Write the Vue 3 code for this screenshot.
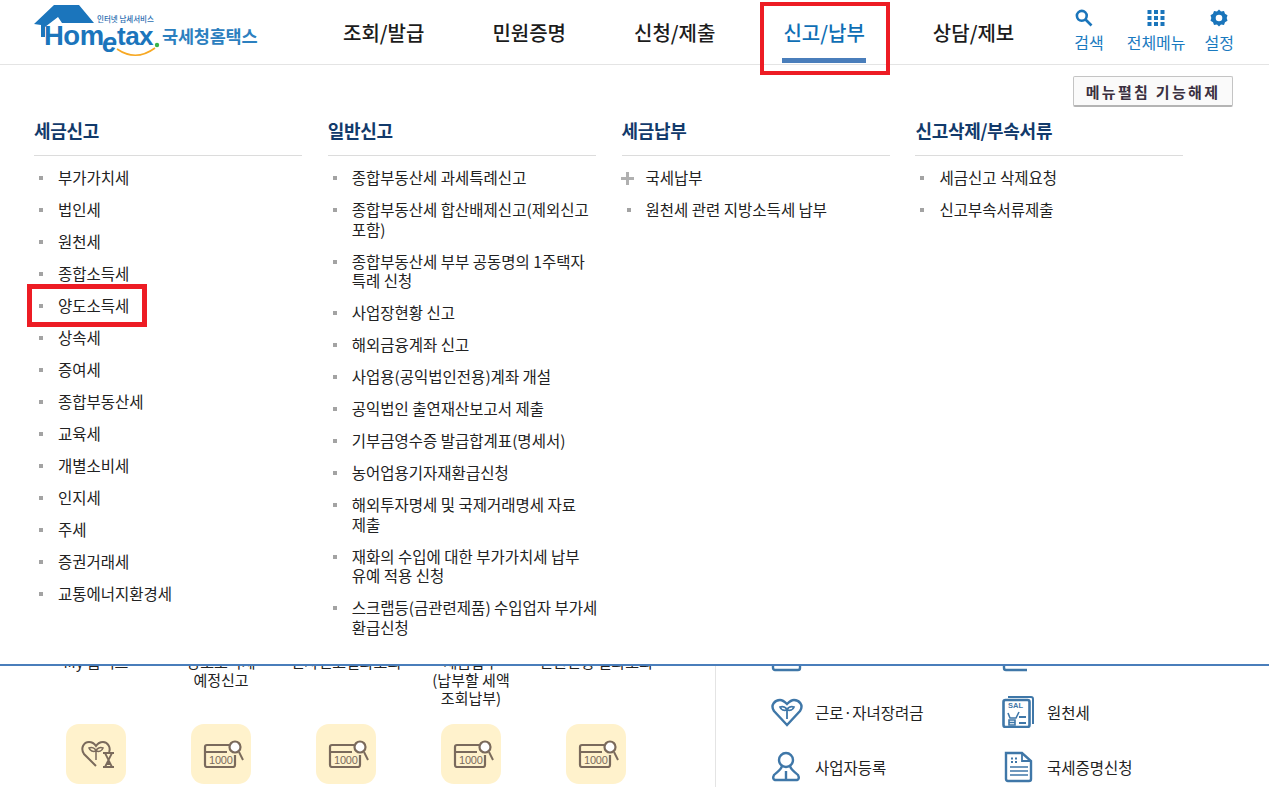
<script setup>
const nav = ['조회/발급', '민원증명', '신청/제출', '신고/납부', '상담/제보']
const columns = [
  { title: '세금신고', items: ['부가가치세', '법인세', '원천세', '종합소득세', '양도소득세', '상속세', '증여세', '종합부동산세', '교육세', '개별소비세', '인지세', '주세', '증권거래세', '교통에너지환경세'] },
  { title: '일반신고', items: ['종합부동산세 과세특례신고', '종합부동산세 합산배제신고(제외신고 포함)', '종합부동산세 부부 공동명의 1주택자 특례 신청', '사업장현황 신고', '해외금융계좌 신고', '사업용(공익법인전용)계좌 개설', '공익법인 출연재산보고서 제출', '기부금영수증 발급합계표(명세서)', '농어업용기자재환급신청', '해외투자명세 및 국제거래명세 자료 제출', '재화의 수입에 대한 부가가치세 납부 유예 적용 신청', '스크랩등(금관련제품) 수입업자 부가세 환급신청'] },
  { title: '세금납부', items: ['국세납부', '원천세 관련 지방소득세 납부'] },
  { title: '신고삭제/부속서류', items: ['세금신고 삭제요청', '신고부속서류제출'] },
]
const quick = [
  { label: ['My 홈택스'], icon: 'heart' },
  { label: ['양도소득세', '예정신고'], icon: 'card' },
  { label: ['전자신고결과조회'], icon: 'card' },
  { label: ['세금납부', '(납부할 세액', '조회납부)'], icon: 'card' },
  { label: ['민원신청 결과조회'], icon: 'card' },
]
</script>

<template>
  <div class="page">
    <header class="header">
      <a class="logo" aria-label="Hometax 국세청홈택스">
        <svg class="logo-mark" width="126" height="56" viewBox="0 0 126 56">
          <path d="M0 20 L20 1 H45 L60 19 H28 L24 13 L11 23 V33 H7 V21 Z" fill="#1b75bc" />
          <text x="10" y="41" class="lm-home">Hom</text>
          <text x="68" y="48" class="lm-e">e</text>
          <text x="83" y="41" class="lm-tax">tax</text>
          <circle cx="123" cy="41" r="2.2" fill="#39b54a" />
          <path d="M83 45 Q102 58 121 44" fill="none" stroke="#f7a823" stroke-width="1.6" />
          <text x="63" y="18" class="lm-small">인터넷 납세서비스</text>
        </svg>
        <span class="logo-name">국세청홈택스</span>
      </a>
      <nav class="nav">
        <a v-for="(n, i) in nav" :key="n" class="nav-item" :class="{ active: i === 3 }">
          {{ n }}
          <span v-if="i === 3" class="nav-bar"></span>
          <span v-if="i === 3" class="nav-mark"></span>
        </a>
      </nav>
      <div class="tools">
        <a class="tool tool-search">
          <svg width="18" height="18" viewBox="0 0 18 18"><circle cx="6.8" cy="6.8" r="4.9" fill="none" stroke="#1a75bb" stroke-width="2.6" /><path d="M10.5 10.5 L16.5 16.5" stroke="#1a75bb" stroke-width="2.6" /></svg>
          <span>검색</span>
        </a>
        <a class="tool">
          <svg width="18" height="18" viewBox="0 0 18 18" fill="#1a75bb">
            <rect x="0.5" y="1" width="4" height="4" /><rect x="7" y="1" width="4" height="4" /><rect x="13.500" y="1" width="4" height="4" />
            <rect x="0.5" y="7" width="4" height="4" /><rect x="7" y="7" width="4" height="4" /><rect x="13.500" y="7" width="4" height="4" />
            <rect x="0.5" y="13" width="4" height="4" /><rect x="7" y="13" width="4" height="4" /><rect x="13.500" y="13" width="4" height="4" />
          </svg>
          <span>전체메뉴</span>
        </a>
        <a class="tool">
          <svg width="18" height="18" viewBox="0 0 18 18"><path fill-rule="evenodd" d="M9 0.500 L11 2.400 L14 2 L15 4.700 L17.500 6.200 L16.700 9 L17.500 11.800 L15 13.300 L14 16 L11 15.600 L9 17.500 L7 15.600 L4 16 L3 13.300 L0.500 11.800 L1.300 9 L0.500 6.200 L3 4.700 L4 2 L7 2.400 Z M9 5.700 A3.300 3.300 0 1 0 9 12.300 A3.300 3.300 0 1 0 9 5.700 Z" fill="#1a75bb" /></svg>
          <span>설정</span>
        </a>
      </div>
    </header>

    <section class="panel">
      <div class="panel-top">
        <button class="unfold" type="button">메뉴펼침 기능해제</button>
      </div>
      <div class="cols">
        <div v-for="c in columns" :key="c.title" class="col">
          <h3 class="col-title">{{ c.title }}</h3>
          <ul class="list">
            <li v-for="it in c.items" :key="it" class="item" :class="{ plus: it === '국세납부' }">
              <span v-if="it === '국세납부'" class="plus-mark"></span>
              {{ it }}
              <span v-if="it === '양도소득세'" class="item-mark"></span>
            </li>
          </ul>
        </div>
      </div>
    </section>

    <section class="below">
      <div class="quick">
        <div v-for="(q, i) in quick" :key="i" class="quick-item">
          <div class="quick-label"><div v-for="l in q.label" :key="l">{{ l }}</div></div>
          <div class="quick-card">
            <svg v-if="q.icon === 'heart'" width="38" height="28" viewBox="0 0 38 28" fill="none" stroke="#7a6a5c" stroke-width="2">
              <path d="M19 26 L7 14 C3 8 7 2 12 2 C15 2 17 3 19 6 C21 3 23 2 26 2 C31 2 34 8 32 12" />
              <path d="M19 20 V11 M19 11 C16 12 13 11 12 8 C15 7 18 8 19 11 C20 8 23 7 26 8 C25 11 22 12 19 11" stroke-width="1.500" />
              <path d="M26 13 H37 M26 27 H37 M28 13 L35 27 M35 13 L28 27" stroke-width="1.800" />
              <path d="M29 25 H34 L31.500 21 Z" fill="#7a6a5c" stroke="none" />
            </svg>
            <svg v-else width="46" height="28" viewBox="0 0 46 28" fill="none" stroke="#7a6a5c">
              <path d="M31 5 H9 Q7 5 7 7 V25 Q7 27 9 27 H35 Q37 27 37 25 V15" stroke-width="2.200" />
              <path d="M7 12 H29" stroke-width="2" />
              <circle cx="37" cy="7" r="5.500" fill="#fff" stroke-width="2.200" />
              <path d="M41 12 L45 20" stroke-width="2" />
              <text x="11" y="24" class="card-num">1000</text>
            </svg>
          </div>
        </div>
      </div>
      <div class="services">
        <div class="svc">
          <svg width="32" height="32" viewBox="0 0 32 32" fill="none" stroke="#3f77a8" stroke-width="2.400"><rect x="2" y="2" width="27" height="27" rx="2" /></svg>
          <span>세금신고</span>
        </div>
        <div class="svc">
          <svg width="32" height="32" viewBox="0 0 32 32" fill="none" stroke="#3f77a8" stroke-width="2.400"><path d="M2 2 V27 Q2 29 4 29 H25" /></svg>
          <span>세금납부</span>
        </div>
        <div class="svc">
          <svg width="32" height="32" viewBox="0 0 32 32" fill="none" stroke="#3f77a8" stroke-width="2.400">
            <path d="M16 29 L3 15 C-1 9 4 4 9 4 C12 4 14 6 16 8 C18 6 20 4 23 4 C28 4 33 9 29 15 Z" />
            <path d="M16 23 V14 M16 14 C13 15 10 14 9 11 C12 10 15 11 16 14 C17 11 20 10 23 11 C22 14 19 15 16 14" stroke-width="1.800" />
          </svg>
          <span>근로·자녀장려금</span>
        </div>
        <div class="svc">
          <svg width="32" height="32" viewBox="0 0 32 32" fill="none" stroke="#3f77a8">
            <path d="M6 1 H29 Q31 1 31 3 V28" stroke-width="2" />
            <rect x="1.500" y="4" width="26" height="27" rx="2" stroke-width="2.600" />
            <text x="6" y="12" class="sal">SAL</text>
            <path d="M6 17 L8 22 H14 L17 16 M7 24 H13 V29 H7 Z M7 26.500 H13" stroke-width="1.600" />
            <path d="M17 21 H24 M17 27 H24" stroke-width="1.800" />
          </svg>
          <span>원천세</span>
        </div>
        <div class="svc">
          <svg width="32" height="32" viewBox="0 0 32 32" fill="none" stroke="#3f77a8" stroke-width="2.400">
            <circle cx="15" cy="9" r="7" />
            <path d="M11 15 C10 19 6 21 3 24 Q1 28 4 29 H26 Q29 28 27 24 C24 21 20 19 19 15 M15 20 V29" />
          </svg>
          <span>사업자등록</span>
        </div>
        <div class="svc">
          <svg width="32" height="32" viewBox="0 0 32 32" fill="none" stroke="#3f77a8" stroke-width="2.400">
            <path d="M4 2 H20 L29 10 V28 Q29 30 27 30 H6 Q4 30 4 28 Z" />
            <path d="M20 2 V10 H29" stroke-width="1.800" />
            <path d="M9 7.500 H11 M13 7.500 H15 M9 11 H11 M13 11 H15" stroke-width="2" />
            <path d="M8 16 H26 M8 20 H26 M8 24 H26" stroke-width="1.500" />
          </svg>
          <span>국세증명신청</span>
        </div>
      </div>
    </section>
  </div>
</template>

<style>
html, body { margin: 0; background: #fff; }
</style>

<style scoped>
.page {
  width: 1269px;
  height: 787px;
  overflow: hidden;
  font-family: "Noto Sans CJK KR", "Noto Sans", sans-serif;
  color: #222;
  background: #fff;
}
a { color: inherit; text-decoration: none; }

.header {
  height: 64px;
  display: flex;
  align-items: stretch;
  border-bottom: 1px solid #e4e4e4;
}
.logo {
  width: 343px;
  flex: none;
  position: relative;
  overflow: hidden;
}
.logo-mark { position: absolute; left: 34px; top: 4px; }
.lm-home { font: 700 27.500px "Liberation Sans", sans-serif; fill: #1b75bc; letter-spacing: -0.5px; }
.lm-tax { font: 700 26px "Liberation Sans", sans-serif; fill: #1b75bc; letter-spacing: -0.5px; }
.lm-e { font: italic 700 27px "Liberation Sans", sans-serif; fill: #1b75bc; }
.lm-small { font: 500 7.500px "Noto Sans CJK KR", sans-serif; fill: #2a6db0; }
.logo-name {
  position: absolute;
  left: 162px;
  top: 24px;
  font-size: 17.500px;
  line-height: 24px;
  font-weight: 700;
  letter-spacing: -0.2px;
  color: #2c80bf;
}
.nav { display: flex; gap: 68px; align-items: stretch; }
.nav-item {
  position: relative;
  display: flex;
  align-items: center;
  height: 65px;
  box-sizing: border-box;
  font-size: 20px;
  font-weight: 500;
  color: #1c1c1c;
  white-space: nowrap;
}
.nav-item.active { color: #0f6fb5; }
.nav-bar {
  position: absolute;
  left: -1px;
  right: -1px;
  top: 58px;
  height: 5px;
  background: #4a7ebb;
}
.nav-mark {
  position: absolute;
  left: -23px;
  right: -25px;
  top: 2px;
  height: 73px;
  border: 4px solid #ed1c24;
  box-sizing: border-box;
  pointer-events: none;
}
.tools {
  margin-left: auto;
  margin-right: 35px;
  display: flex;
  gap: 19px;
}
.tool {
  display: flex;
  flex-direction: column;
  align-items: center;
  padding-top: 9px;
  font-size: 16px;
  line-height: 22px;
  color: #1a7abf;
  white-space: nowrap;
}
.tool svg { margin-bottom: 4px; display: block; }
.tool-search { margin-right: 4px; }
.tool-search svg { margin-right: 9px; }

.panel { height: 601px; box-sizing: border-box; border-bottom: 2px solid #4a7ebb; }
.panel-top { display: flex; justify-content: flex-end; padding: 11px 36px 0 0; height: 31px; }
.unfold {
  width: 160px;
  height: 31px;
  padding: 0;
  border: 1px solid #c4c4c4;
  border-bottom: 2px solid #b4b4b4;
  border-radius: 2px;
  background: #fafafa;
  font: 700 15px "Noto Sans CJK KR", sans-serif;
  letter-spacing: 2.300px;
  color: #3a3040;
}
.cols {
  display: grid;
  grid-template-columns: repeat(4, 268px);
  column-gap: 25.800px;
  padding-left: 34px;
}
.col-title {
  margin: 0;
  height: 49px;
  box-sizing: border-box;
  padding-top: 11px;
  font-size: 18px;
  line-height: 24px;
  font-weight: 700;
  letter-spacing: -0.3px;
  color: #123a6b;
  border-bottom: 1px solid #dcdcdc;
}
.list { list-style: none; margin: 0; padding: 6px 0 0; }
.item {
  position: relative;
  margin-right: -4px;
  padding: 6.250px 0 6.250px 24px;
  font-size: 15.500px;
  line-height: 19.500px;
  color: #222;
  word-break: keep-all;
}
.item::before {
  content: "";
  position: absolute;
  left: 5px;
  top: 14px;
  width: 4px;
  height: 4px;
  background: #a3a3a3;
}
.item.plus::before { display: none; }
.plus-mark {
  position: absolute;
  left: -1px;
  top: 10px;
  width: 13px;
  height: 13px;
  background:
    linear-gradient(#b0b0b0, #b0b0b0) center / 13px 3px no-repeat,
    linear-gradient(#b0b0b0, #b0b0b0) center / 3px 13px no-repeat;
}
.item-mark {
  position: absolute;
  left: -7px;
  top: -6px;
  width: 120px;
  height: 43px;
  border: 5px solid #ed1c24;
  box-sizing: border-box;
  pointer-events: none;
}

.below {
  height: 121px;
  overflow: hidden;
  display: flex;
}
.quick {
  width: 716px;
  flex: none;
  box-sizing: border-box;
  margin-top: -14px;
  padding-left: 33.500px;
  display: flex;
  border-right: 1px solid #e4e4e4;
  height: 135px;
  font-size: 15px;
  line-height: 18px;
  color: #222;
}
.quick-item { width: 125px; display: flex; flex-direction: column; align-items: center; flex: none; }
.quick-label { height: 72px; box-sizing: border-box; padding-top: 1px; text-align: center; white-space: nowrap; }
.quick-card {
  width: 60px;
  height: 60px;
  border-radius: 13px;
  background: #fff2cc;
  display: flex;
  align-items: center;
  justify-content: center;
  flex: none;
}
.card-num { font: 400 11px "Liberation Sans", sans-serif; fill: #7a6a5c; stroke: none; letter-spacing: -0.2px; }
.services {
  flex: none;
  display: grid;
  grid-template-columns: 231px 230px;
  grid-auto-rows: 55px;
  padding-left: 55px;
  margin-top: -37px;
}
.svc {
  display: flex;
  align-items: center;
  gap: 12px;
  font-size: 15.500px;
  color: #222;
  white-space: nowrap;
}
.svc:nth-child(even) { gap: 13px; }
.svc svg { flex: none; }
.sal { font: 700 7.500px "Liberation Sans", sans-serif; fill: #3f77a8; stroke: none; }
</style>
